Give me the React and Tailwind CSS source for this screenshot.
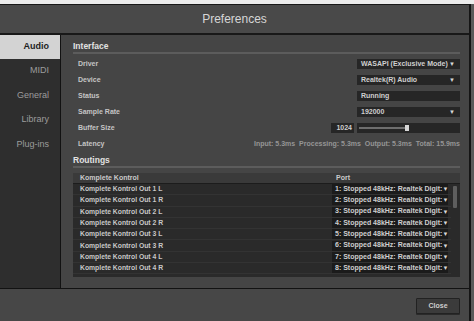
import React from 'react'

const FONT = { fontFamily: '"Liberation Sans", Arial, sans-serif' }

const TABS = ['Audio', 'MIDI', 'General', 'Library', 'Plug-ins']

const ROUTES = [
  'Komplete Kontrol Out 1 L',
  'Komplete Kontrol Out 1 R',
  'Komplete Kontrol Out 2 L',
  'Komplete Kontrol Out 2 R',
  'Komplete Kontrol Out 3 L',
  'Komplete Kontrol Out 3 R',
  'Komplete Kontrol Out 4 L',
  'Komplete Kontrol Out 4 R',
]

function Caret() {
  return <span className="text-[6px] leading-none text-[#d8d8d8]">▼</span>
}

function Field({ children, arrow }) {
  return (
    <div className="flex h-[10px] w-[103px] items-center justify-between bg-[#262626] pl-[4px] pr-[5px] text-[7px] font-bold text-[#cfcfcf]">
      <span className="whitespace-nowrap">{children}</span>
      {arrow && <Caret />}
    </div>
  )
}

function Row({ label, children }) {
  return (
    <div className="flex h-[10px] items-center justify-between pl-[5px]">
      <span className="text-[7px] font-bold text-[#c4c4c4]">{label}</span>
      {children}
    </div>
  )
}

function Section({ title }) {
  return (
    <div className="flex h-[19px] items-end border-b-2 border-[#5c5c5c] pb-[2px]">
      <span className="text-[8.5px] font-bold leading-none text-[#e2e2e2]">{title}</span>
    </div>
  )
}

export default function App() {
  return (
    <div className="relative h-[321px] w-[474px] overflow-hidden bg-[#5a5a5a]" style={FONT}>
      <div className="h-[4px] bg-[#ececec]" />
      <div className="flex h-[317px] w-[471px] flex-col border-r-2 border-[#151515]">
        {/* title bar */}
        <div className="flex h-[31px] items-center justify-center border-t border-b-2 border-[#181818] bg-[#494949]">
          <span className="text-[12px] text-[#d6d6d6]">Preferences</span>
        </div>

        <div className="flex h-[254px] border-b border-[#121212]">
          {/* sidebar */}
          <div className="w-[61px] border-r border-[#121212] bg-[#2e2e2e]">
            {TABS.map((t, i) => (
              <div
                key={t}
                className={
                  i === 0
                    ? 'flex h-[24px] items-center justify-end bg-[#d3d3d3] pr-[11px] text-[9px] font-bold text-[#1e1e1e]'
                    : 'flex h-[24.4px] items-center justify-end pr-[11px] text-[9px] text-[#9c9c9c]'
                }
              >
                {t}
              </div>
            ))}
          </div>

          {/* main */}
          <div className="flex-1 bg-[#454545] pl-[12px] pr-[9px]">
            <Section title="Interface" />
            <div className="mt-[5px] flex flex-col gap-[6px]">
              <Row label="Driver">
                <Field arrow>WASAPI (Exclusive Mode)</Field>
              </Row>
              <Row label="Device">
                <Field arrow>Realtek(R) Audio</Field>
              </Row>
              <Row label="Status">
                <Field>Running</Field>
              </Row>
              <Row label="Sample Rate">
                <Field arrow>192000</Field>
              </Row>
              <Row label="Buffer Size">
                <div className="flex items-center gap-[3px]">
                  <div className="flex h-[10px] w-[23px] items-center justify-end bg-[#262626] pr-[2px] text-[7px] font-bold text-[#cfcfcf]">
                    1024
                  </div>
                  <div className="relative h-[10px] w-[103px] bg-[#262626]">
                    <div className="absolute left-[2px] top-[4px] h-[2px] w-[47px] bg-[#6e6e6e]" />
                    <div className="absolute left-[48px] top-[2px] h-[6px] w-[4px] bg-[#d6d6d6]" />
                  </div>
                </div>
              </Row>
              <Row label="Latency">
                <span className="whitespace-nowrap text-[7px] font-bold text-[#959595]">
                  Input: 5.3ms&nbsp; Processing: 5.3ms&nbsp; Output: 5.3ms&nbsp; Total: 15.9ms
                </span>
              </Row>
            </div>

            <Section title="Routings" />

            <div className="mt-[5px] bg-[#2a2a2a] pb-[3px]">
              <div className="flex h-[11px] items-center border-b border-[#1c1c1c] bg-[#3a3a3a] text-[7px] font-bold text-[#cacaca]">
                <span className="w-[259px] pl-[7px]">Komplete Kontrol</span>
                <span className="pl-[4px]">Port</span>
              </div>
              <div className="flex">
                <div className="flex-1">
                  {ROUTES.map((r, i) => (
                    <div key={r} className="flex h-[11.3px] items-center border-b border-[#333333]">
                      <span className="w-[259px] pl-[7px] text-[6.8px] font-bold text-[#c8c8c8]">{r}</span>
                      <div className="flex h-[10px] w-[116px] items-center justify-between bg-[#1b1b1b] pl-[3px] pr-[3px] text-[7px] font-bold text-[#cfcfcf]">
                        <span className="whitespace-nowrap">{i + 1}: Stopped 48kHz: Realtek Digit:</span>
                        <Caret />
                      </div>
                    </div>
                  ))}
                </div>
                <div className="w-[9px] pl-[2px] pt-[2px]">
                  <div className="h-[22px] w-[4px] rounded-[1px] bg-[#5e5e5e]" />
                </div>
              </div>
            </div>
          </div>
        </div>

        {/* bottom bar */}
        <div className="flex flex-1 items-start justify-end bg-[#474747] pr-[9px] pt-[9px]">
          <button className="flex h-[16px] w-[44px] items-center justify-center rounded-[1px] border border-[#222222] bg-[#3b3b3b] text-[7px] font-bold text-[#cfcfcf] shadow-[0_1px_0_#2a2a2a]">
            Close
          </button>
        </div>
      </div>
    </div>
  )
}
